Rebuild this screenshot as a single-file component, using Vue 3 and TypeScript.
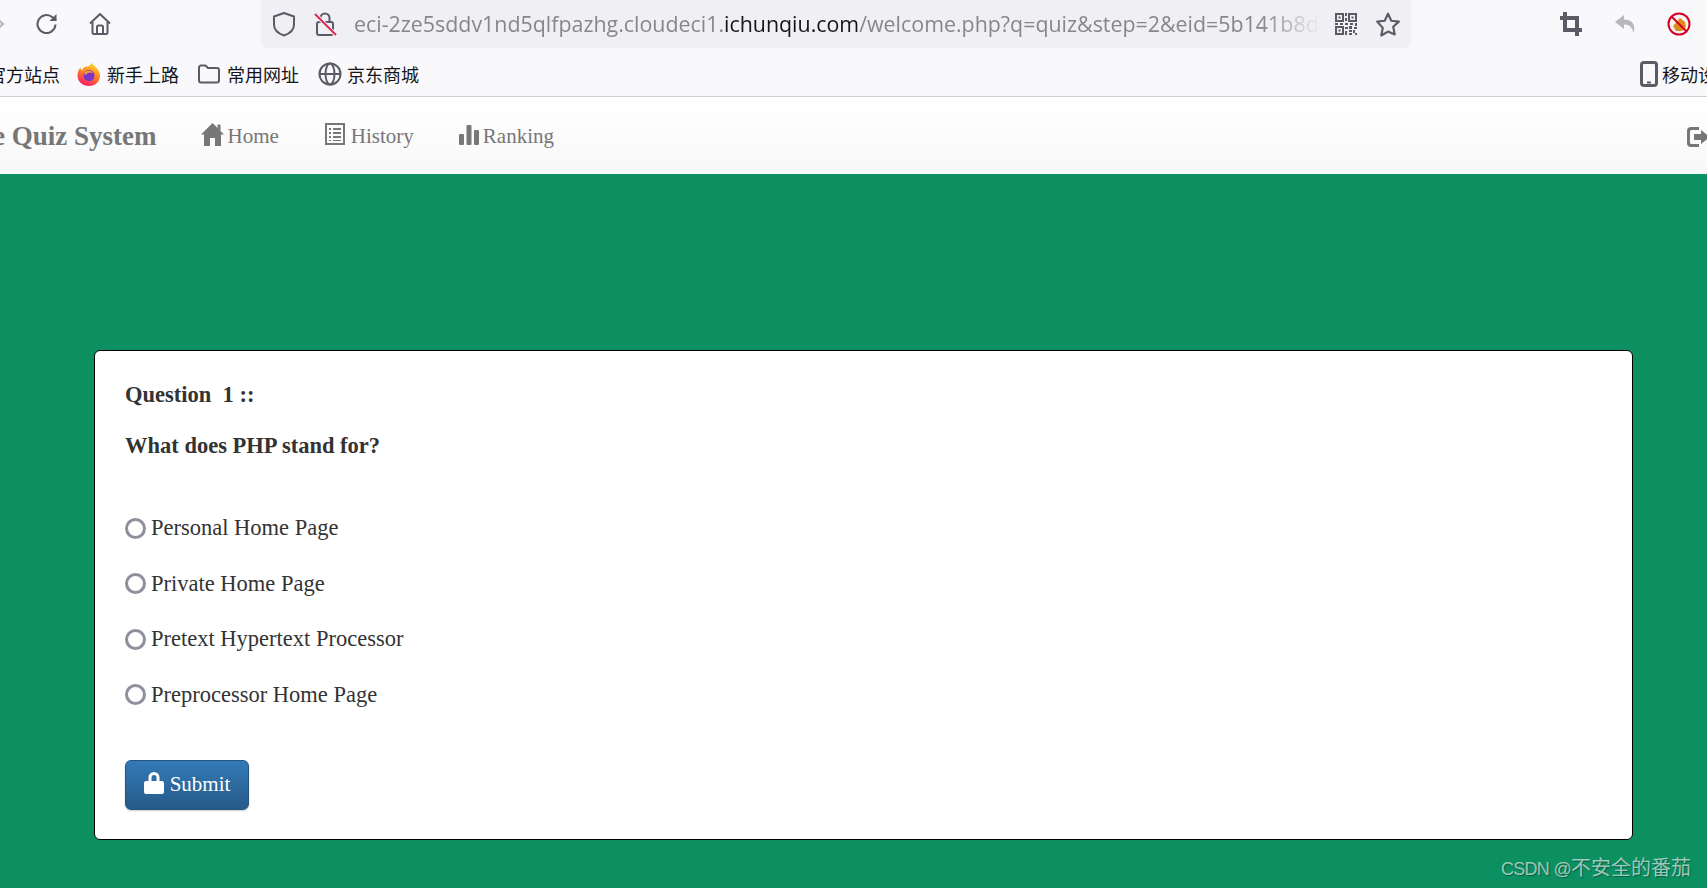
<script setup lang="ts">
const options: string[] = [
  'Personal Home Page',
  'Private Home Page',
  'Pretext Hypertext Processor',
  'Preprocessor Home Page',
];
</script>

<template>
  <div class="screen">
    <div class="toolbar">
      <svg class="back" width="8" height="20" viewBox="0 0 8 20"><path d="M-4 4l7 6-7 6" fill="none" stroke="#b6b6bc" stroke-width="2" /></svg>
      <svg class="reload" width="24" height="24" viewBox="0 0 24 24" fill="none" stroke="#5b5b66" stroke-width="2">
        <path d="M20.5 12.5a9 9 0 1 1-3-7.2L21 8.5" />
        <path d="M21.5 2v7h-7" fill="#5b5b66" stroke="none" />
      </svg>
      <svg class="home" width="24" height="24" viewBox="0 0 24 24" fill="none" stroke="#5b5b66" stroke-width="2" stroke-linejoin="round">
        <path d="M2 11.5 12 2l10 9.5" />
        <path d="M4.5 10v10.5a1.5 1.5 0 0 0 1.5 1.5h12a1.5 1.5 0 0 0 1.5-1.5V10" />
        <path d="M9 22v-7a1.5 1.5 0 0 1 1.5-1.5h3A1.5 1.5 0 0 1 15 15v7" />
      </svg>
      <div class="address">
        <svg class="shield" width="24" height="26" viewBox="0 0 24 26" fill="none" stroke="#5b5b66" stroke-width="2" stroke-linejoin="round">
          <path d="M12 2 22 5.5v8c0 5.5-4 9-10 11-6-2-10-5.500-10-11v-8z" />
        </svg>
        <svg class="padlock" width="24" height="26" viewBox="0 0 24 26" fill="none">
          <rect x="4" y="11" width="16" height="13" rx="2" stroke="#5b5b66" stroke-width="2" />
          <path d="M7.500 11V7a4.500 4.500 0 0 1 9 0v4" stroke="#5b5b66" stroke-width="2" />
          <path d="M2 3l21 21" stroke="#f0f0f4" stroke-width="4" />
          <path d="M2 3l21 21" stroke="#e22850" stroke-width="2" />
        </svg>
        <div class="url"><span>eci-2ze5sddv1nd5qlfpazhg.cloudeci1.</span><b>ichunqiu.com</b><span>/welcome.php?q=quiz&amp;step=2&amp;eid=5b141b8d2</span></div>
        <svg class="qr" width="22" height="22" viewBox="0 0 22 22" fill="#5b5b66">
          <path fill-rule="evenodd" d="M0 0h9v9H0zM2 2v5h5V2zM13 0h9v9h-9zM15 2v5h5V2zM0 13h9v9H0zM2 15v5h5v-5z" />
          <path d="M3.500 3.500h2v2h-2zM16.500 3.500h2v2h-2zM3.500 16.500h2v2h-2zM10 0h2v3h-2zM10 5h2v3h-2zM0 10h3v2H0zM5 10h3v2H5zM10 10h3v2h-3zM15 10h3v2h-3zM20 10h2v3h-2zM10 14h3v2h-3zM14 13h3v3h-3zM19 14h3v2h-3zM10 18h2v4h-2zM14 17h3v2h-3zM18 17h2v3h-2zM14 20h3v2h-3zM20 20h2v2h-2z" />
        </svg>
        <svg class="star" width="26" height="26" viewBox="0 0 24 24" fill="none" stroke="#5b5b66" stroke-width="2" stroke-linejoin="round">
          <path d="M12 2.500 15 9l7 .8-5.200 4.800 1.400 7L12 19l-6.200 3.600 1.400-7L2 9.800 9 9z" />
        </svg>
      </div>
      <svg class="crop" width="22" height="24" viewBox="0 0 22 24" fill="none" stroke="#5b5b66" stroke-width="4">
        <path d="M0 6h17v18" />
        <path d="M5 0v18h17" />
      </svg>
      <svg class="undo" width="22" height="20" viewBox="0 0 22 20" fill="#b8b8be">
        <path d="M9 1 0 8l9 7v-4.500c5 0 8 2 9.500 8.500 2.500-8-1-13.500-9.500-13.500z" />
      </svg>
      <svg class="blocker" width="24" height="24" viewBox="0 0 24 24">
        <circle cx="12" cy="12" r="10.500" fill="#f4f4f4" stroke="#d70022" stroke-width="2" />
        <path d="M6 14l7-8 5 4 1 5-4 4H9z" fill="#e08a1e" />
        <path d="M4.500 4.500l15 15" stroke="#d70022" stroke-width="2" />
      </svg>
    </div>

    <div class="bookmarks">
      <span class="mark first">官方站点</span>
      <svg class="fox" width="24" height="24" viewBox="0 0 24 24">
        <defs>
          <linearGradient id="foxFill" x1="0.700" y1="0" x2="0.300" y2="1">
            <stop offset="0" stop-color="#ffe226" />
            <stop offset="0.450" stop-color="#ff8a1f" />
            <stop offset="1" stop-color="#f5156c" />
          </linearGradient>
        </defs>
        <path d="M14.500 0c.5 2.500 3 3.500 5 6 3 3.500 4 6 3.500 8.500C22.500 20 18 24 12 24 5.500 24 .5 19.500.5 13.500.5 10 2 7 3.500 5.500c0 1.500.5 2.500 1.500 3C6 6 8 4.500 10 4.500c2 0 4-1.500 4.500-4.500z" fill="url(#foxFill)" />
        <circle cx="12" cy="13.500" r="5.500" fill="#7a35c8" />
        <path d="M7 11c2-3 7-3 9 0-3-1-6-1-7 2-1-1-1.500-1-2-2z" fill="#ff9d2e" />
      </svg>
      <span class="mark">新手上路</span>
      <svg class="folder" width="22" height="20" viewBox="0 0 22 20" fill="none" stroke="#5b5b66" stroke-width="2" stroke-linejoin="round">
        <path d="M1 3.500A2 2 0 0 1 3 1.500h4.500L10 4h9a2 2 0 0 1 2 2v10.500a2 2 0 0 1-2 2H3a2 2 0 0 1-2-2z" />
      </svg>
      <span class="mark">常用网址</span>
      <svg class="globe" width="24" height="24" viewBox="0 0 24 24" fill="none" stroke="#5b5b66" stroke-width="2">
        <circle cx="12" cy="12" r="10.500" />
        <ellipse cx="12" cy="12" rx="4.500" ry="10.500" />
        <path d="M1.500 12h21" />
      </svg>
      <span class="mark">京东商城</span>
      <svg class="phone" width="18" height="26" viewBox="0 0 18 26" fill="none">
        <rect x="1.500" y="1.500" width="15" height="23" rx="2.500" stroke="#5b5b66" stroke-width="3" />
        <path d="M7 21.500h4" stroke="#5b5b66" stroke-width="2" />
      </svg>
      <span class="mark">移动设备上的书签</span>
    </div>

    <nav class="navbar">
      <a class="brand">Online Quiz System</a>
      <a class="nav-item first">
        <svg width="23" height="24" viewBox="0 0 23 24" fill="#777"><path d="M11.500 1 23 12.500h-3V24h-6v-8H9v8H3V12.500H0zM16.500 2.500h3v7l-3-3z" /></svg>
        Home
      </a>
      <a class="nav-item wide">
        <svg width="20" height="22" viewBox="0 0 20 22" fill="#777">
          <path fill-rule="evenodd" d="M0 0h20v22H0zM2 2v18h16V2z" />
          <path d="M4 5h2v2H4zM8 5h8v2H8zM4 9h2v2H4zM8 9h8v2H8zM4 13h2v2H4zM8 13h8v2H8zM4 17h2v1H4zM8 17h8v1H8z" />
        </svg>
        History
      </a>
      <a class="nav-item">
        <svg width="20" height="22" viewBox="0 0 20 22" fill="#777">
          <rect x="0" y="11" width="5" height="11" rx="1" />
          <rect x="7.500" y="2" width="5" height="20" rx="1" />
          <rect x="15" y="7" width="5" height="15" rx="1" />
        </svg>
        Ranking
      </a>
      <a class="logout">
        <svg width="23" height="20" viewBox="0 0 23 20" fill="#777">
          <path d="M4 0h8v3H4.500A1.500 1.500 0 0 0 3 4.500v11A1.500 1.500 0 0 0 4.500 17H12v3H4a4 4 0 0 1-4-4V4a4 4 0 0 1 4-4z" />
          <path d="M14 3l9 7-9 7v-4H7V7h7z" />
        </svg>
      </a>
    </nav>

    <main class="content">
      <form class="panel" @submit.prevent>
        <p class="question">Question &nbsp;1 ::</p>
        <p class="question prompt">What does PHP stand for?</p>
        <div class="choices">
          <label v-for="opt in options" :key="opt" class="choice">
            <input type="radio" name="ans" :value="opt" />
            {{ opt }}
          </label>
        </div>
        <button type="submit" class="submit">
          <svg width="20" height="22" viewBox="0 0 20 22" fill="#fff">
            <path fill-rule="evenodd" d="M4.500 9V5.500a5.500 5.500 0 0 1 11 0V9H18a2 2 0 0 1 2 2v9a2 2 0 0 1-2 2H2a2 2 0 0 1-2-2v-9a2 2 0 0 1 2-2zM7.500 9h5V5.500a2.500 2.500 0 0 0-5 0z" />
          </svg>
          Submit
        </button>
      </form>
    </main>

    <div class="watermark"><span class="latin">CSDN @</span>不安全的番茄</div>
  </div>
</template>

<style scoped>
.screen {
  position: relative;
  width: 1707px;
  height: 888px;
  overflow: hidden;
  display: flex;
  flex-direction: column;
  background: #0c9061;
}

.toolbar {
  height: 48px;
  flex: none;
  display: flex;
  align-items: center;
  background: #f9f9fb;
}

.back { margin-right: 27px; }
.reload { margin-right: 29px; }
.home { margin-right: 149px; }

.address {
  width: 1150px;
  height: 48px;
  flex: none;
  display: flex;
  align-items: center;
  padding-left: 11px;
  box-sizing: border-box;
  background: #f0f0f4;
  border-radius: 0 0 7px 7px;
}

.shield { margin-right: 17px; }
.padlock { margin-right: 17px; }

.url {
  width: 966px;
  flex: none;
  margin-top: -2px;
  overflow: hidden;
  white-space: nowrap;
  font-family: "Open Sans", "Noto Sans", sans-serif;
  font-size: 21.400px;
  color: #86868d;
  -webkit-mask-image: linear-gradient(to right, #000 94%, transparent 100%);
  mask-image: linear-gradient(to right, #000 94%, transparent 100%);
}

.url b {
  font-weight: 400;
  color: #15141a;
}

.qr { margin: 0 18px 0 15px; flex: none; }
.star { flex: none; }

.crop { margin-left: 149px; }
.undo { margin-left: 33px; }
.blocker { margin-left: 30px; flex: none; }

.bookmarks {
  height: 49px;
  flex: none;
  display: flex;
  align-items: center;
  padding-top: 4px;
  box-sizing: border-box;
  background: #f9f9fb;
  border-bottom: 1px solid #cfcfd8;
  white-space: nowrap;
}

.mark {
  font-family: "Noto Sans CJK SC", sans-serif;
  font-size: 18px;
  color: #15141a;
  flex: none;
}

.mark.first { margin-left: -12px; }
.fox { margin: 0 6px 0 17px; flex: none; }
.folder { margin: 0 7px 0 19px; flex: none; }
.globe { margin: 0 5px 0 19px; flex: none; }
.phone { margin: 0 4px 0 1221px; flex: none; }

.navbar {
  height: 77px;
  flex: none;
  display: flex;
  align-items: center;
  padding-top: 2px;
  box-sizing: border-box;
  background: linear-gradient(to bottom, #fff 0%, #f8f8f8 100%);
  color: #777;
  font-family: "Liberation Serif", serif;
  font-size: 21px;
  white-space: nowrap;
}

.brand {
  margin-left: -73px;
  font-size: 27px;
  font-weight: 700;
  flex: none;
}

.nav-item {
  display: flex;
  align-items: center;
  gap: 4px;
  margin-left: 45px;
  flex: none;
}

.nav-item.first { margin-left: 44px; }
.nav-item.wide { gap: 6px; margin-left: 46px; }
.nav-item svg { margin-top: -5px; }

.logout {
  margin-left: auto;
  margin-right: -3px;
  display: flex;
  flex: none;
}

.content {
  flex: 1;
  padding: 176px 74px 0 94px;
}

.panel {
  height: 490px;
  box-sizing: border-box;
  padding: 29px 30px 0;
  background: #fff;
  border: 1px solid #000;
  border-radius: 6px;
  font-family: "Liberation Serif", serif;
  color: #333;
}

.question {
  margin: 0 0 21px;
  font-size: 22.500px;
  line-height: 30px;
  font-weight: 700;
  white-space: pre-wrap;
}

.prompt { margin-bottom: 52px; }

.choices {
  display: flex;
  flex-direction: column;
  gap: 25.500px;
}

.choice {
  display: flex;
  align-items: center;
  gap: 5px;
  height: 30px;
  font-size: 22.500px;
}

.choice input {
  appearance: none;
  width: 21px;
  height: 21px;
  margin: 0;
  flex: none;
  background: #fff;
  border: 3px solid #8f8f9d;
  border-radius: 50%;
  box-sizing: border-box;
}

.submit {
  margin-top: 50px;
  width: 124px;
  height: 50px;
  display: flex;
  align-items: center;
  justify-content: center;
  gap: 6px;
  padding: 0;
  color: #fff;
  font-family: inherit;
  font-size: 21px;
  background: linear-gradient(to bottom, #337ab7 0%, #265a88 100%);
  border: 1px solid #245580;
  border-radius: 6px;
  box-shadow: 0 1px 2px rgba(0, 0, 0, 0.2);
}

.submit svg { margin-top: -4px; }

.watermark {
  position: absolute;
  right: 16px;
  bottom: 7px;
  font-family: "Liberation Sans", "Noto Sans CJK SC", sans-serif;
  font-size: 20px;
  color: rgba(255, 255, 255, 0.6);
  text-shadow: 1px 1px 1px rgba(0, 0, 0, 0.35);
}

.latin {
  font-size: 18px;
  letter-spacing: -0.700px;
}
</style>

<style>
body {
  margin: 0;
}
</style>
